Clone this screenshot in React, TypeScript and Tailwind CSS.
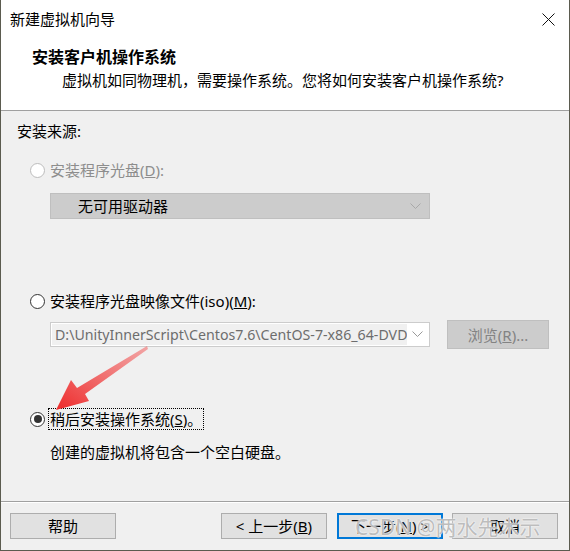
import React from 'react';

const FONT = '"Noto Sans", "Noto Sans CJK SC", sans-serif';

const Radio = ({ state }: { state: 'disabled' | 'off' | 'on' }) => {
  const border = state === 'disabled' ? 'border-[#bcbcbc]' : 'border-[#333333]';
  return (
    <div className={`w-[15px] h-[15px] rounded-full border bg-white flex items-center justify-center ${border}`}>
      {state === 'on' && <div className="w-[8px] h-[8px] rounded-full bg-[#333333]" />}
    </div>
  );
};

const Chevron = ({ color }: { color: string }) => (
  <svg width="11" height="7" viewBox="0 0 11 7">
    <path d="M0.5 0.5 L5.5 5.5 L10.5 0.5" fill="none" stroke={color} strokeWidth="1" />
  </svg>
);

const Button = ({ children, primary }: { children: React.ReactNode; primary?: boolean }) => (
  <div
    className={`w-[106px] h-[26px] flex items-center justify-center bg-[#e1e1e1] text-[15px] leading-[20px] text-black ${
      primary ? 'border-2 border-[#0078d7]' : 'border border-[#adadad]'
    }`}
  >
    {children}
  </div>
);

export default function App() {
  return (
    <div className="relative w-[570px] h-[551px] border-l border-r border-b border-[#5b5b4f] flex flex-col overflow-hidden" style={{ fontFamily: FONT }}>
      {/* title bar + header */}
      <div className="bg-white">
        <div className="h-[38px] flex items-start justify-between pl-[9px] pr-[14px] pt-[9px]">
          <span className="text-[15px] leading-[20px] text-black">新建虚拟机向导</span>
          <svg width="13" height="13" viewBox="0 0 13 13" className="mt-[4px]">
            <path d="M0.5 0.5 L12.5 12.5 M12.5 0.5 L0.5 12.5" stroke="#111" strokeWidth="1" />
          </svg>
        </div>
        <div className="pt-[9px] pb-[20px]">
          <div className="pl-[31px] text-[16px] leading-[20px] font-bold text-black">安装客户机操作系统</div>
          <div className="pl-[61px] mt-[3px] text-[15px] leading-[20px] text-black">
            虚拟机如同物理机，需要操作系统。您将如何安装客户机操作系统?
          </div>
        </div>
      </div>
      <div className="h-px bg-[#a0a0a0]" />

      {/* body */}
      <div className="flex-1 bg-[#f0f0f0] pt-[10px] pl-[16px] text-[15px] leading-[20px]">
        <div className="text-black">安装来源:</div>

        <div className="mt-[19px] ml-[13px] flex items-center gap-[5px] text-[#8d8d8d]">
          <Radio state="disabled" />
          <span>安装程序光盘(<u>D</u>):</span>
        </div>
        <div className="mt-[13px] ml-[33px] w-[380px] h-[26px] bg-[#cccccc] border border-[#bfbfbf] flex items-center justify-between pl-[27px] pr-[8px]">
          <span className="text-black">无可用驱动器</span>
          <Chevron color="#a8a8a8" />
        </div>

        <div className="mt-[72px] ml-[13px] flex items-center gap-[5px] text-black">
          <Radio state="off" />
          <span>安装程序光盘映像文件(iso)(<u>M</u>):</span>
        </div>
        <div className="mt-[9px] ml-[33px] flex items-center gap-[17px]">
          <div className="w-[380px] h-[25px] bg-white border border-[#cccccc] flex items-center pl-[1px] pr-[6px]">
            <div className="w-[355px] h-[21px] bg-[#f0f0f0] overflow-hidden whitespace-nowrap text-[#6d6d6d] text-[14.2px] leading-[21px] pl-[3px]">
              D:\UnityInnerScript\Centos7.6\CentOS-7-x86_64-DVD-1810.iso
            </div>
            <div className="ml-auto">
              <Chevron color="#999999" />
            </div>
          </div>
          <div className="w-[102px] h-[29px] bg-[#cccccc] border border-[#bfbfbf] flex items-center justify-center text-[#838383]">
            浏览(<u>R</u>)...
          </div>
        </div>

        <div className="mt-[59px] ml-[13px] flex items-center gap-[3px] text-black">
          <Radio state="on" />
          <span className="border border-dotted border-black px-[1px] leading-[20px]">
            稍后安装操作系统(<u>S</u>)。
          </span>
        </div>
        <div className="mt-[12px] ml-[33px] text-black">创建的虚拟机将包含一个空白硬盘。</div>
      </div>

      {/* footer */}
      <div className="h-px bg-[#a0a0a0]" />
      <div className="h-px bg-white" />
      <div className="h-[47px] bg-[#f0f0f0] flex items-start pt-[10px] pl-[9px] pr-[11px]">
        <Button>帮助</Button>
        <div className="ml-auto flex gap-[10px]">
          <Button>&lt; 上一步(<u>B</u>)</Button>
          <Button primary>下一步(<u>N</u>) &gt;</Button>
        </div>
        <div className="ml-[9px]">
          <Button>取消</Button>
        </div>
      </div>

      {/* red arrow annotation */}
      <svg className="absolute left-0 top-0 pointer-events-none" width="570" height="551">
        <defs>
          <linearGradient id="arr" x1="1" y1="0" x2="0" y2="1">
            <stop offset="0%" stopColor="#f35a5a" stopOpacity="0.5" />
            <stop offset="100%" stopColor="#ee2a2a" />
          </linearGradient>
        </defs>
        <polygon points="146,346 147,349 84,394 88,401 55,410 70,380 76,388" fill="url(#arr)" />
      </svg>

      {/* watermark */}
      <div
        className="absolute left-[354px] top-[514px] text-[21px] leading-[26px] text-[rgba(160,160,160,0.7)] whitespace-nowrap pointer-events-none"
        style={{ textShadow: '0 0 1px #fff, 0 0 2px #fff' }}
      >
        CSDN @两水先木示
      </div>
    </div>
  );
}
